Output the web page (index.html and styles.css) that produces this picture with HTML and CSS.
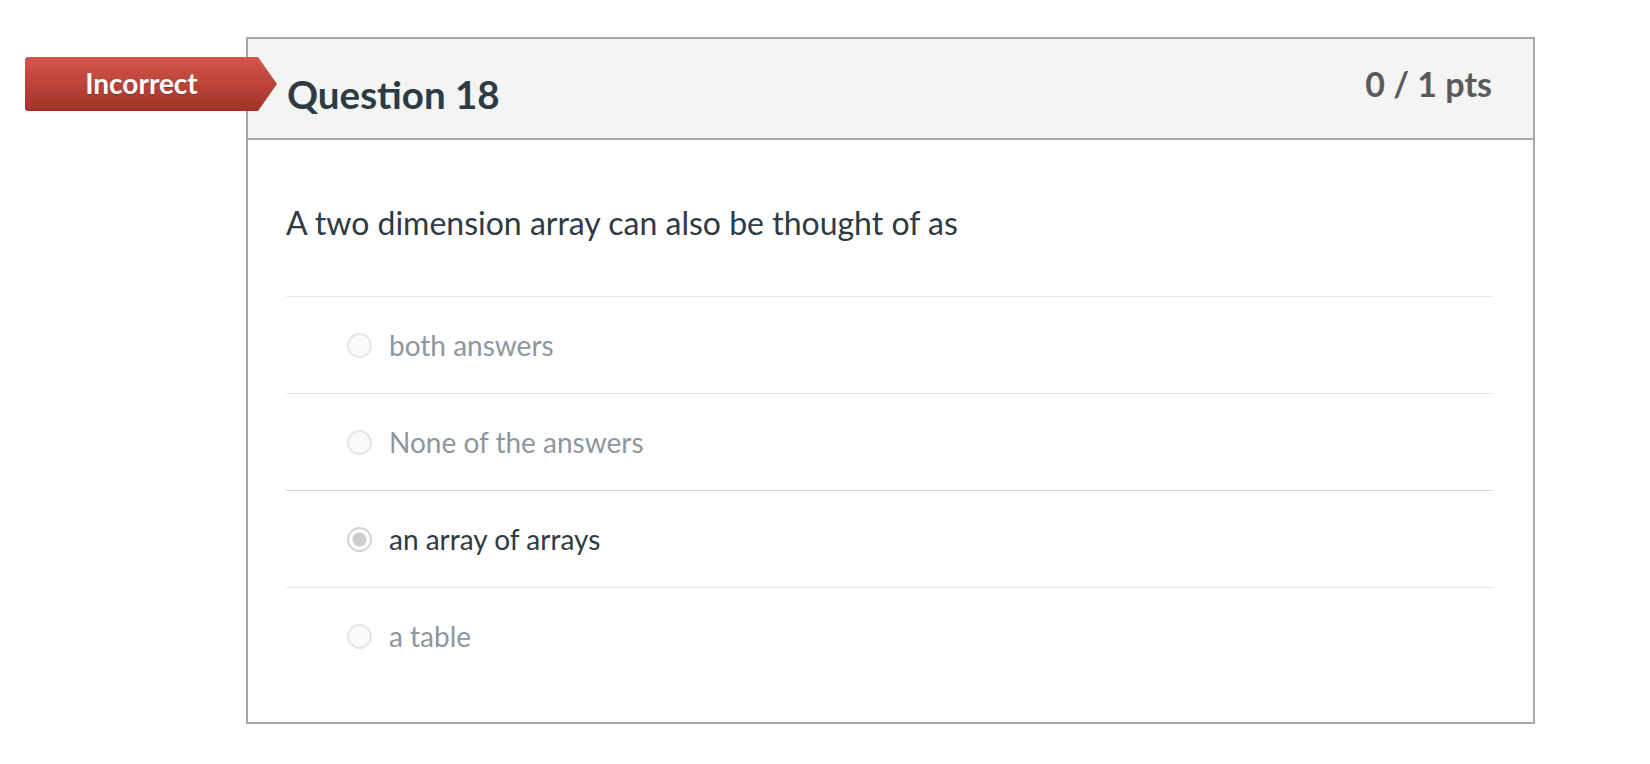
FILE: index.html
```html
<!DOCTYPE html>
<html lang="en">
<head>
  <meta charset="UTF-8" />
  <title>Question 18</title>
  <link rel="stylesheet" href="styles.css">
</head>
<body>
  <div class="page">
    <div class="question">
      <div class="result-badge">Incorrect</div>

      <div class="question-header">
        <h2 class="question-name">Question 18</h2>
        <span class="question-points">0 / 1 pts</span>
      </div>

      <div class="question-body">
        <p class="question-text">A two dimension array can also be thought of as</p>

        <div class="answers">
          <div class="answer">
            <span class="radio"></span>
            <span class="answer-text">both answers</span>
          </div>
          <div class="answer">
            <span class="radio"></span>
            <span class="answer-text">None of the answers</span>
          </div>
          <div class="answer selected">
            <span class="radio"></span>
            <span class="answer-text">an array of arrays</span>
          </div>
          <div class="answer">
            <span class="radio"></span>
            <span class="answer-text">a table</span>
          </div>
        </div>
      </div>
    </div>
  </div>
</body>
</html>
```

FILE: styles.css
```css
body {
  margin: 0;
  font-family: Lato, "Open Sans", sans-serif;
  background: #fff;
  color: #2d3b45;
}
.page {
  padding: 37px 0 0 246px;
}
.question {
  position: relative;
  width: 1285px;
  border: 2px solid #a8a8a8;
  background: #fff;
}
.result-badge {
  position: absolute;
  top: 18px;
  left: -223px;
  width: 233px;
  height: 54px;
  padding-right: 19px;
  line-height: 52px;
  text-align: center;
  font-size: 28px;
  font-weight: 700;
  color: #fff;
  text-shadow: 0 1px 1px rgba(0,0,0,0.25);
  background: linear-gradient(#d4564a, #a3322a);
  border-radius: 3px 0 0 3px;
  clip-path: polygon(0 0, 233px 0, 252px 50%, 233px 100%, 0 100%);
}
.question-header {
  display: flex;
  justify-content: space-between;
  align-items: flex-start;
  height: 99px;
  padding: 0 41px 0 39px;
  background: #f4f4f4;
  border-bottom: 2px solid #a8a8a8;
}
.question-name {
  margin: 32px 0 0;
  font-size: 38.5px;
  line-height: 46px;
  font-weight: 700;
  color: #2d3b45;
}
.question-points {
  margin-top: 25px;
  font-size: 34px;
  line-height: 40px;
  font-weight: 700;
  color: #5a5a5a;
}
.question-body {
  padding: 64px 40px 38px 38px;
}
.question-text {
  margin: 0 0 54px;
  font-size: 32px;
  line-height: 38px;
}
.answer {
  display: flex;
  align-items: center;
  gap: 17px;
  height: 96px;
  padding-left: 61px;
  border-top: 1px solid #e9e9e9;
}
.answer.selected {
  border-top-color: #d6d6d6;
}
.answer-text {
  font-size: 28px;
  color: #8e979f;
}
.selected .answer-text {
  color: #2d3b45;
}
.radio {
  box-sizing: border-box;
  width: 25px;
  height: 25px;
  border: 2px solid #e6e6e6;
  border-radius: 50%;
  background: #fafafa;
}
.selected .radio {
  border-color: #d3d3d3;
  background: radial-gradient(circle, #cdcdcd 0 6.5px, #fff 7.5px);
}
```
